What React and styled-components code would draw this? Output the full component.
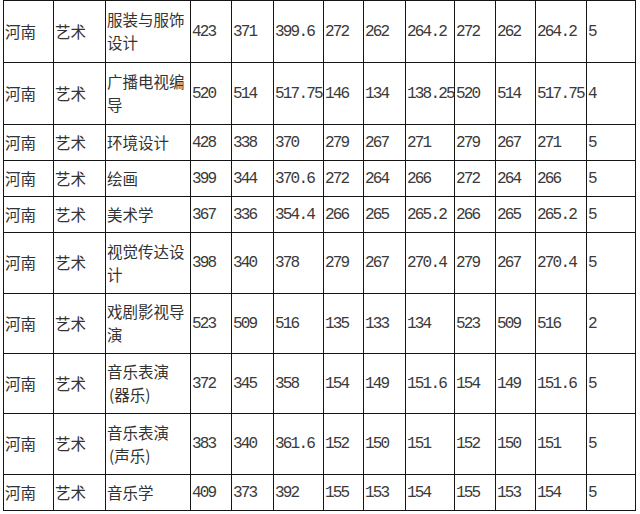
import styled, { createGlobalStyle } from "styled-components";

const GlobalStyle = createGlobalStyle`
  html, body {
    margin: 0;
    padding: 0;
    background: #fff;
  }
`;

const widths = [50, 52, 85, 41, 42, 50, 40, 42, 49, 41, 40, 51, 49];

const rows = [
  { h: 62, major: ["服装与服饰设计"], nums: ["423", "371", "399.6", "272", "262", "264.2", "272", "262", "264.2", "5"] },
  { h: 62, major: ["广播电视编导"], nums: ["520", "514", "517.75", "146", "134", "138.25", "520", "514", "517.75", "4"] },
  { h: 36, major: ["环境设计"], nums: ["428", "338", "370", "279", "267", "271", "279", "267", "271", "5"] },
  { h: 36, major: ["绘画"], nums: ["399", "344", "370.6", "272", "264", "266", "272", "264", "266", "5"] },
  { h: 36, major: ["美术学"], nums: ["367", "336", "354.4", "266", "265", "265.2", "266", "265", "265.2", "5"] },
  { h: 61, major: ["视觉传达设计"], nums: ["398", "340", "378", "279", "267", "270.4", "279", "267", "270.4", "5"] },
  { h: 60, major: ["戏剧影视导演"], nums: ["523", "509", "516", "135", "133", "134", "523", "509", "516", "2"] },
  { h: 60, major: ["音乐表演", "(器乐)"], nums: ["372", "345", "358", "154", "149", "151.6", "154", "149", "151.6", "5"] },
  { h: 61, major: ["音乐表演", "(声乐)"], nums: ["383", "340", "361.6", "152", "150", "151", "152", "150", "151", "5"] },
  { h: 36, major: ["音乐学"], nums: ["409", "373", "392", "155", "153", "154", "155", "153", "154", "5"] },
];

const Page = styled.div`
  padding-left: 3px;
  background: #fff;
  width: 640px;
  height: 514px;
  box-sizing: border-box;
  overflow: hidden;
`;

const Table = styled.div`
  display: inline-block;
  border-left: 1px solid #151515;
  border-top: 1px solid #151515;
`;

const Row = styled.div`
  display: grid;
  grid-template-columns: ${widths.map((w) => `${w}px`).join(" ")};
  height: ${(p) => p.$h}px;
`;

const Cell = styled.div`
  box-sizing: border-box;
  border-right: 1px solid #151515;
  border-bottom: 1px solid #151515;
  display: flex;
  align-items: center;
  padding-left: 1px;
  overflow: visible;
  white-space: nowrap;
  color: #333;
`;

const TextCell = styled(Cell)`
  font-family: "Noto Sans CJK SC", sans-serif;
  font-size: 15.5px;
  line-height: 23px;
  white-space: normal;
  word-break: break-all;
  padding-bottom: 1px;
`;

const MajorLine = styled.span`
  display: block;
  padding-left: ${(p) => (p.$paren ? "2px" : "0")};
`;

const NumCell = styled(Cell)`
  font-family: "Liberation Mono", monospace;
  font-size: 16px;
  letter-spacing: -1.8px;
  color: #3a3a3a;
`;

export default function App() {
  return (
    <>
      <GlobalStyle />
      <Page>
        <Table>
          {rows.map((r, i) => (
            <Row key={i} $h={r.h}>
              <TextCell>河南</TextCell>
              <TextCell>艺术</TextCell>
              <TextCell>
                <div>
                  {r.major.map((line, k) => (
                    <MajorLine key={k} $paren={k > 0}>
                      {line}
                    </MajorLine>
                  ))}
                </div>
              </TextCell>
              {r.nums.map((n, j) => (
                <NumCell key={j}>{n}</NumCell>
              ))}
            </Row>
          ))}
        </Table>
      </Page>
    </>
  );
}
